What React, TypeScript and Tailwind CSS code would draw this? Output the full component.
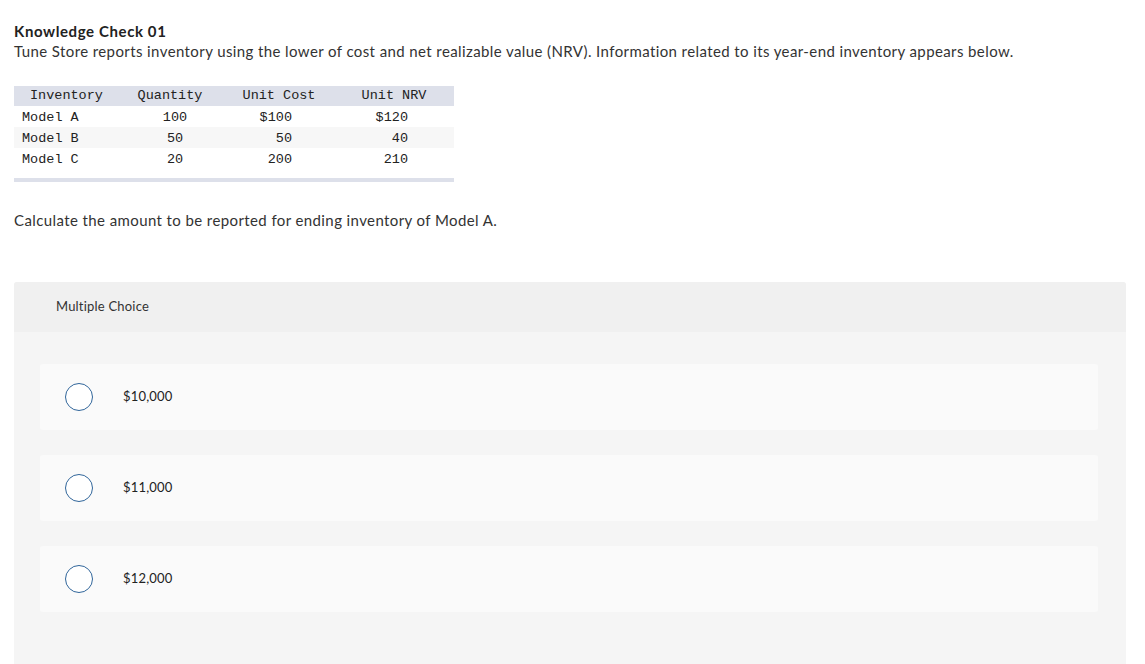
import React from "react";

const rows = [
    { name: "Model A", qty: "100", cost: "$100", nrv: "$120" },
    { name: "Model B", qty: "50", cost: "50", nrv: "40" },
    { name: "Model C", qty: "20", cost: "200", nrv: "210" },
];

const choices = ["$10,000", "$11,000", "$12,000"];

export default function App() {
    return (
        <div className="min-h-[664px] bg-white text-[#333] px-[14px] pt-[22px] font-['Lato',_'Liberation_Sans',_sans-serif]">
            <h1 className="text-[15px] font-bold leading-[18px] text-[#222] tracking-[0.6px]">Knowledge Check 01</h1>
            <p className="text-[15px] leading-[22px] text-[#333] tracking-[0.4px]">
                Tune Store reports inventory using the lower of cost and net realizable value (NRV). Information related to its year-end inventory appears below.
            </p>

            {/* inventory table */}
            <div className="mt-[24px] w-[440px] font-['Liberation_Mono',_monospace] text-[13.5px] text-[#222]">
                <div className="grid grid-cols-[106px_110px_110px_114px] h-[20px] items-center bg-[#dde0ea]">
                    <div className="pl-[16px]">Inventory</div>
                    <div className="text-center pr-[10px]">Quantity</div>
                    <div className="text-center pr-[12px]">Unit Cost</div>
                    <div className="text-center pr-[6px]">Unit NRV</div>
                </div>
                {rows.map((r, i) => (
                    <div
                        key={r.name}
                        className={`grid grid-cols-[106px_110px_110px_114px] h-[21px] pt-[2px] items-center ${i === 1 ? "bg-[#f7f7f7]" : "bg-white"}`}
                    >
                        <div className="pl-[8px]">{r.name}</div>
                        <div className="text-center">{r.qty}</div>
                        <div className="text-right pr-[48px]">{r.cost}</div>
                        <div className="text-right pr-[46px]">{r.nrv}</div>
                    </div>
                ))}
                <div className="mt-[9px] h-[4px] bg-[#dde0ea]" />
            </div>

            <p className="mt-[27px] text-[15px] leading-[22px] tracking-[0.4px]">Calculate the amount to be reported for ending inventory of Model A.</p>

            {/* multiple choice panel */}
            <div className="mt-[51px] w-[1112px] rounded-t-[3px] bg-[#f5f5f5] pb-[60px]">
                <div className="h-[50px] flex items-center pl-[42px] bg-[#f0f0f0] rounded-t-[3px] text-[13px] text-[#333] tracking-[0.2px]">
                    Multiple Choice
                </div>
                <div className="flex flex-col gap-[25px] pt-[32px] pl-[26px] pr-[28px]">
                    {choices.map((c) => (
                        <div key={c} className="h-[66px] rounded-[3px] bg-[#fafafa] flex items-center">
                            <div className="ml-[25px] w-[28px] h-[28px] rounded-full border-[1.5px] border-[#30659a] bg-white" />
                            <span className="ml-[30px] text-[13px] text-[#222] tracking-[0.2px]">{c}</span>
                        </div>
                    ))}
                </div>
            </div>
        </div>
    );
}
